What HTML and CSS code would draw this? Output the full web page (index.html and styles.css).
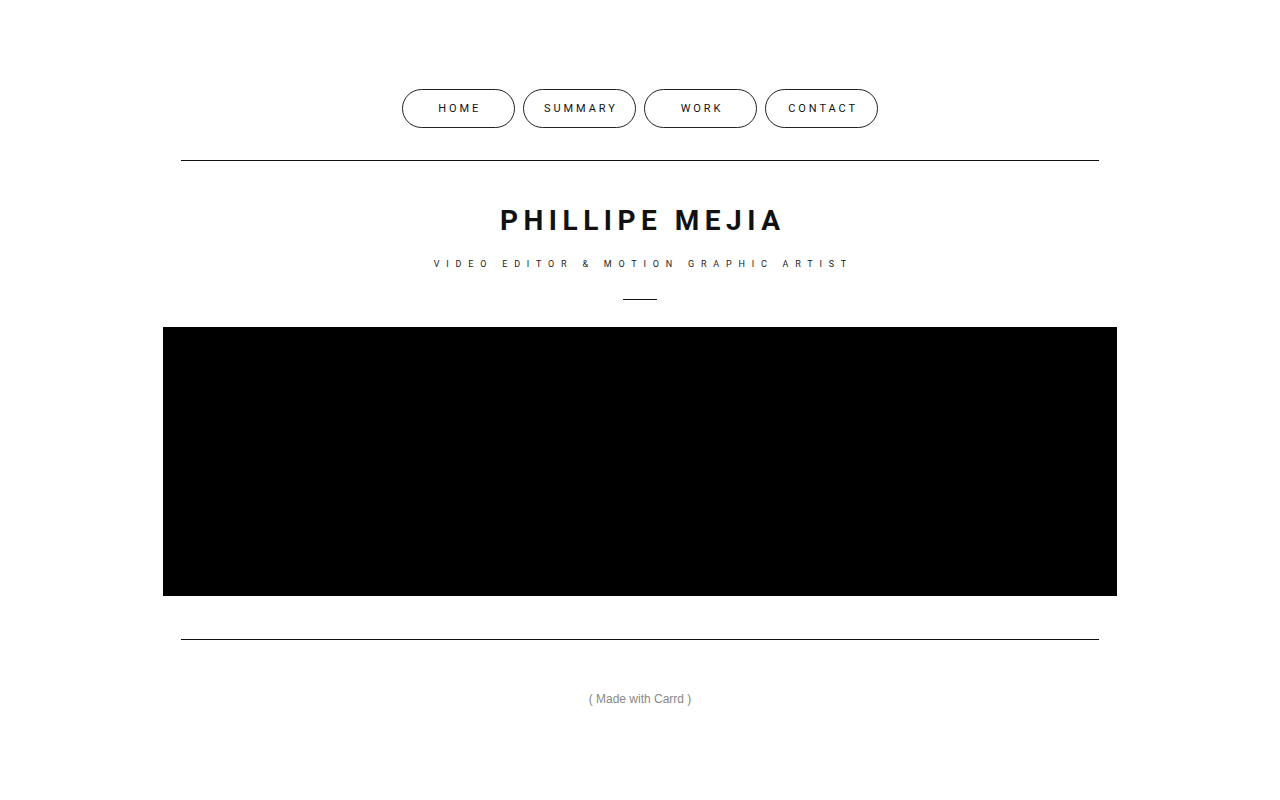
FILE: index.html
```html
<!DOCTYPE html>
<html>
<head>
<meta charset="utf-8">
<link rel="stylesheet" href="styles.css">
</head>
<body>
<div class="page">
  <nav class="nav">
    <a class="pill">HOME</a>
    <a class="pill">SUMMARY</a>
    <a class="pill">WORK</a>
    <a class="pill">CONTACT</a>
  </nav>
  <hr class="rule rule-top">
  <h1 class="title">PHILLIPE MEJIA</h1>
  <p class="subtitle">VIDEO EDITOR &amp; MOTION GRAPHIC ARTIST</p>
  <div class="short"></div>
  <div class="video"></div>
  <hr class="rule rule-bottom">
  <p class="credit">( Made with Carrd )</p>
</div>
</body>
</html>
```
FILE: styles.css
```css
html, body {
  margin: 0;
  padding: 0;
  background: #fff;
}
.page {
  width: 954px;
  margin: 0 auto;
  padding-top: 89px;
  display: flex;
  flex-direction: column;
  align-items: center;
  font-family: Roboto, "Liberation Sans", sans-serif;
}
.nav {
  display: flex;
  gap: 8.6px;
}
.pill {
  box-sizing: border-box;
  width: 112.5px;
  height: 39px;
  border: 1px solid #222;
  border-radius: 20px;
  display: flex;
  align-items: center;
  justify-content: center;
  font-size: 11px;
  letter-spacing: 2.9px;
  padding-left: 2.9px;
  color: #111;
  text-decoration: none;
}
.rule {
  width: 918px;
  border: 0;
  border-top: 1px solid #111;
  margin: 0;
}
.rule-top { margin-top: 32px; }
.title {
  margin: 45px 0 0;
  font-size: 28px;
  font-weight: 700;
  letter-spacing: 5.5px;
  padding-left: 5.5px;
  color: #111;
  line-height: 30px;
}
.subtitle {
  margin: 22px 0 0;
  font-size: 9px;
  letter-spacing: 6.8px;
  padding-left: 6.8px;
  color: #222;
  line-height: 12px;
}
.short {
  width: 34px;
  border-top: 1px solid #111;
  margin-top: 29px;
}
.video {
  width: 954px;
  height: 269px;
  background: #000;
  margin-top: 27px;
}
.rule-bottom { margin-top: 43px; }
.credit {
  margin: 52px 0 0;
  font-family: "Liberation Sans", Arial, sans-serif;
  font-size: 12px;
  color: #888;
  line-height: 14px;
}
```
